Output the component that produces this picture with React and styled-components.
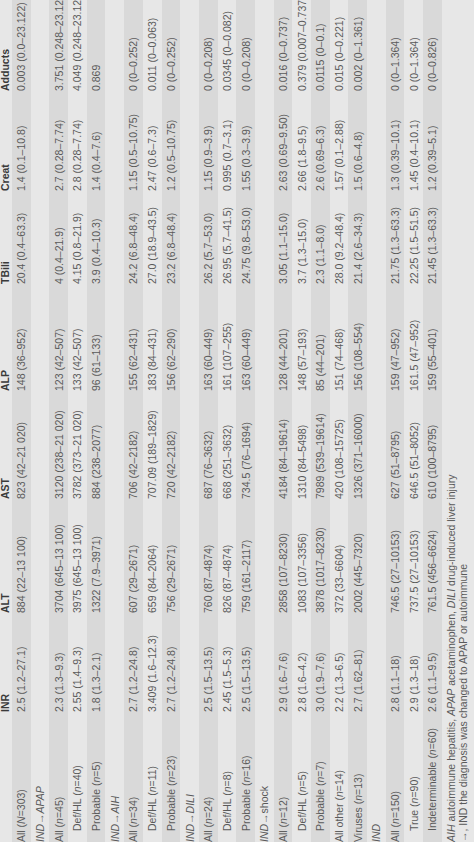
import React from "react";
import styled, { createGlobalStyle } from "styled-components";

const Global = createGlobalStyle`
  html, body { margin: 0; padding: 0; background: #e7e7e7; overflow: hidden; }
  * { box-sizing: border-box; }
`;

const Stage = styled.div`
  width: 474px;
  height: 842px;
  overflow: hidden;
  background: #e7e7e7;
`;

const Sheet = styled.div`
  width: 845px;
  height: 474px;
  transform-origin: 0 0;
  transform: translateY(842px) rotate(-90deg);
  display: flex;
  flex-direction: column;
  font-family: "Liberation Sans", Arial, sans-serif;
  font-size: 10.5px;
  color: #5a5a5a;
  margin-left: -3px;
`;

const cols = "130px 99px 114px 108px 107px 93px 100px 94px";

const HeadRow = styled.div`
  display: grid;
  grid-template-columns: ${cols};
  height: 15px;
  align-items: center;
  font-weight: bold;
  color: #3a3a3a;
  white-space: nowrap;
`;

const Row = styled.div`
  display: grid;
  grid-template-columns: ${cols};
  height: 18.7px;
  align-items: center;
  white-space: nowrap;
  background: ${(p) => (p.$shaded ? "#d9d9d9" : "transparent")};
`;

const Cell = styled.div`
  overflow: visible;
`;

const Label = styled.div`
  padding-left: ${(p) => (p.$indent ? "11px" : "0")};
`;

const Foot = styled.div`
  margin-top: 3px;
  line-height: 12.5px;
  white-space: nowrap;
  color: #5a5a5a;
`;

const I = styled.i`
  font-style: italic;
`;

const rows = [
  { l: <>All (<I>N</I>=303)</>, v: ["2.5 (1.2–27.1)", "884 (22–13 100)", "823 (42–21 020)", "148 (36–952)", "20.4 (0.4–63.3)", "1.4 (0.1–10.8)", "0.003 (0.0–23.122)"] },
  { l: <><I>IND</I>→<I>APAP</I></>, section: true },
  { l: <>All (<I>n</I>=45)</>, v: ["2.3 (1.3–9.3)", "3704 (645–13 100)", "3120 (238–21 020)", "123 (42–507)", "4 (0.4–21.9)", "2.7 (0.28–7.74)", "3.751 (0.248–23.121)"] },
  { l: <>Def/HL (<I>n</I>=40)</>, indent: true, v: ["2.55 (1.4–9.3)", "3975 (645–13 100)", "3782 (373–21 020)", "133 (42–507)", "4.15 (0.8–21.9)", "2.8 (0.28–7.74)", "4.049 (0.248–23.121)"] },
  { l: <>Probable (<I>n</I>=5)</>, indent: true, v: ["1.8 (1.3–2.1)", "1322 (7.9–3971)", "884 (238–2077)", "96 (61–133)", "3.9 (0.4–10.3)", "1.4 (0.4–7.6)", "0.869"] },
  { l: <><I>IND</I>→<I>AIH</I></>, section: true },
  { l: <>All (<I>n</I>=34)</>, v: ["2.7 (1.2–24.8)", "607 (29–2671)", "706 (42–2182)", "155 (62–431)", "24.2 (6.8–48.4)", "1.15 (0.5–10.75)", "0 (0–0.252)"] },
  { l: <>Def/HL (<I>n</I>=11)</>, indent: true, v: ["3.409 (1.6–12.3)", "659 (84–2064)", "707.09 (189–1829)", "183 (84–431)", "27.0 (18.9–43.5)", "2.47 (0.6–7.3)", "0.011 (0–0.063)"] },
  { l: <>Probable (<I>n</I>=23)</>, indent: true, v: ["2.7 (1.2–24.8)", "756 (29–2671)", "720 (42–2182)", "156 (62–290)", "23.2 (6.8–48.4)", "1.2 (0.5–10.75)", "0 (0–0.252)"] },
  { l: <><I>IND</I>→<I>DILI</I></>, section: true },
  { l: <>All (<I>n</I>=24)</>, v: ["2.5 (1.5–13.5)", "760 (87–4874)", "687 (76–3632)", "163 (60–449)", "26.2 (5.7–53.0)", "1.15 (0.9–3.9)", "0 (0–0.208)"] },
  { l: <>Def/HL (<I>n</I>=8)</>, indent: true, v: ["2.45 (1.5–5.3)", "826 (87–4874)", "668 (251–3632)", "161 (107–255)", "26.95 (5.7–41.5)", "0.995 (0.7–3.1)", "0.0345 (0–0.082)"] },
  { l: <>Probable (<I>n</I>=16)</>, indent: true, v: ["2.5 (1.5–13.5)", "759 (161–2117)", "734.5 (76–1694)", "163 (60–449)", "24.75 (9.8–53.0)", "1.55 (0.3–3.9)", "0 (0–0.208)"] },
  { l: <><I>IND</I>→shock</>, section: true },
  { l: <>All (<I>n</I>=12)</>, v: ["2.9 (1.6–7.6)", "2858 (107–8230)", "4184 (84–19614)", "128 (44–201)", "3.05 (1.1–15.0)", "2.63 (0.69–9.50)", "0.016 (0–0.737)"] },
  { l: <>Def/HL (<I>n</I>=5)</>, indent: true, v: ["2.8 (1.6–4.2)", "1083 (107–3356)", "1310 (84–5498)", "148 (57–193)", "3.7 (1.3–15.0)", "2.66 (1.8–9.5)", "0.379 (0.007–0.737)"] },
  { l: <>Probable (<I>n</I>=7)</>, indent: true, v: ["3.0 (1.9–7.6)", "3878 (1017–8230)", "7989 (539–19614)", "85 (44–201)", "2.3 (1.1–8.0)", "2.6 (0.69–6.3)", "0.0115 (0–0.1)"] },
  { l: <>All other (<I>n</I>=14)</>, v: ["2.2 (1.3–6.5)", "372 (33–6604)", "420 (108–15725)", "151 (74–468)", "28.0 (9.2–48.4)", "1.57 (0.1–2.88)", "0.015 (0–0.221)"] },
  { l: <>Viruses (<I>n</I>=13)</>, v: ["2.7 (1.62–81)", "2002 (445–7320)", "1326 (371–16000)", "156 (108–554)", "21.4 (2.6–34.3)", "1.5 (0.6–4.8)", "0.002 (0–1.361)"] },
  { l: <I>IND</I>, section: true },
  { l: <>All (<I>n</I>=150)</>, v: ["2.8 (1.1–18)", "746.5 (27–10153)", "627 (51–8795)", "159 (47–952)", "21.75 (1.3–63.3)", "1.3 (0.39–10.1)", "0 (0–1.364)"] },
  { l: <>True (<I>n</I>=90)</>, indent: true, v: ["2.9 (1.3–18)", "737.5 (27–10153)", "646.5 (51–8052)", "161.5 (47–952)", "22.25 (1.5–51.5)", "1.45 (0.4–10.1)", "0 (0–1.364)"] },
  { l: <>Indeterminable (<I>n</I>=60)</>, indent: true, v: ["2.6 (1.1–9.5)", "761.5 (456–6624)", "610 (100–8795)", "159 (55–401)", "21.45 (1.3–63.3)", "1.2 (0.39–5.1)", "0 (0–0.826)"] },
];

const heads = ["", "INR", "ALT", "AST", "ALP", "TBili", "Creat", "Adducts"];

export default function App() {
  return (
    <>
      <Global />
      <Stage>
        <Sheet>
          <HeadRow>
            {heads.map((h, i) => (
              <Cell key={i}>{h}</Cell>
            ))}
          </HeadRow>
          {rows.map((r, i) => (
            <Row key={i} $shaded={i % 2 === 0}>
              <Label $indent={r.indent}>{r.l}</Label>
              {(r.v || []).map((v, j) => (
                <Cell key={j}>{v}</Cell>
              ))}
            </Row>
          ))}
          <Foot>
            <I>AIH</I> autoimmune hepatitis, <I>APAP</I> acetaminophen, <I>DILI</I> drug-induced liver injury
            <br />
            →, IND the diagnosis was changed to APAP or autoimmune
          </Foot>
        </Sheet>
      </Stage>
    </>
  );
}
